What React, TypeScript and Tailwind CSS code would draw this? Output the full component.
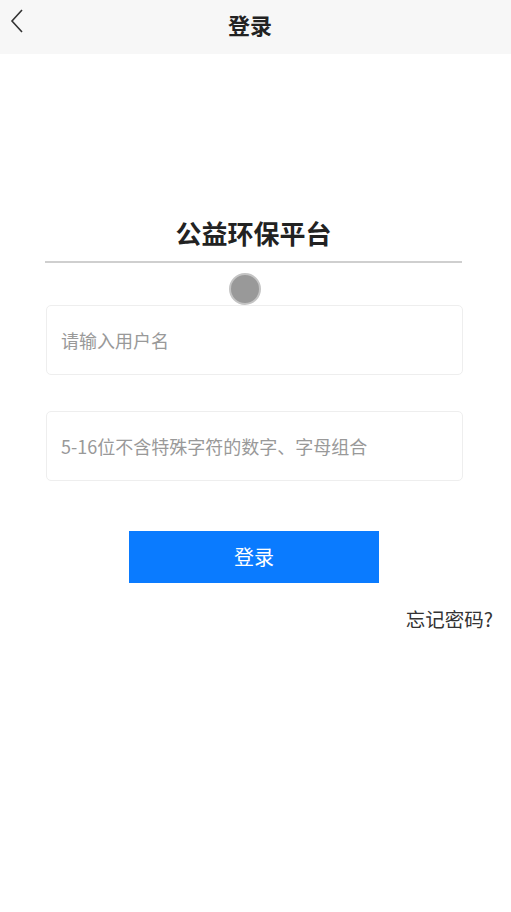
export default function App() {
  const font = { fontFamily: '"Noto Sans CJK SC", "Noto Sans", sans-serif' };
  return (
    <div className="w-[511px] h-[912px] bg-white flex flex-col" style={font}>
      <div className="h-[54px] bg-[#f7f7f7] flex items-start justify-center relative">
        <svg className="absolute left-[9px] top-[8px]" width="16" height="26" viewBox="0 0 16 26">
          <path d="M13 2 L3 13 L13 24" fill="none" stroke="#333" strokeWidth="1.6" />
        </svg>
        <span className="text-[22px] font-bold text-[#222] leading-none mt-[13px] -ml-[11px]">登录</span>
      </div>
      <div className="flex flex-col pl-[45px] pt-[166px]">
        <div className="w-[417px] flex justify-center">
          <span className="text-[26px] font-bold text-[#222] leading-none">公益环保平台</span>
        </div>
        <div className="w-[417px] h-[2px] bg-[#cfcfcf] mt-[15px]" />
        <div className="w-[417px] flex justify-center mt-[10px]">
          <div className="w-[32px] h-[32px] rounded-full bg-[#999] border-2 border-[#c4c4c4] -ml-[17px]" />
        </div>
        <div className="w-[417px] h-[70px] border border-[#eeeeee] rounded-[5px] ml-[1px] flex items-center pl-[14px]">
          <span className="text-[18px] text-[#999] leading-none">请输入用户名</span>
        </div>
        <div className="w-[417px] h-[70px] border border-[#eeeeee] rounded-[5px] ml-[1px] mt-[36px] flex items-center pl-[14px]">
          <span className="text-[18px] text-[#999] leading-none">5-16位不含特殊字符的数字、字母组合</span>
        </div>
        <div className="w-[250px] h-[52px] bg-[#0a7bff] mt-[50px] ml-[84px] flex items-center justify-center">
          <span className="text-[20px] text-white leading-none">登录</span>
        </div>
      </div>
      <div className="flex justify-end pr-[18px] mt-[26px]">
        <span className="text-[19.5px] text-[#333] leading-none">忘记密码?</span>
      </div>
    </div>
  );
}
